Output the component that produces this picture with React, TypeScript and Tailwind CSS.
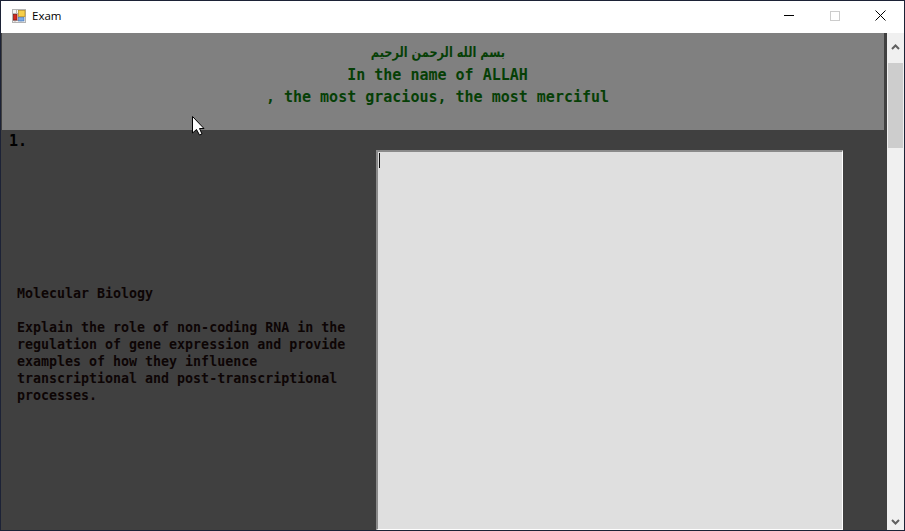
export default function App() {
  const mono = { fontFamily: '"DejaVu Sans Mono", monospace' };
  return (
    <div className="w-[905px] h-[531px] overflow-hidden flex flex-col bg-[#1c2236] p-px">
      <div className="h-[32px] shrink-0 bg-white flex items-center relative">
        <svg width="14" height="14" viewBox="0 0 14 14" className="ml-[11px] mt-[-3px]">
          <rect x="0.5" y="0.5" width="13" height="13" fill="#f4f4f4" stroke="#b4b4b4" />
          <path d="M0.5 4.5 H6 M4.5 0.5 V4.5 M0.5 11.5 H6 M3 11.5 V13.5 M9 12.5 V13.5" stroke="#b4b4b4" fill="none" />
          <rect x="6.5" y="1.5" width="6.5" height="6" fill="#f7cf4a" stroke="#b8912a" strokeWidth="0.8" />
          <rect x="1.5" y="5.5" width="3.5" height="5.5" fill="#d4281e" stroke="#8a1a14" strokeWidth="0.8" />
          <rect x="6.5" y="8.5" width="5.5" height="3.5" fill="#7aaae8" stroke="#3f70b0" strokeWidth="0.6" />
        </svg>
        <span className="ml-[6px] text-[11.5px] text-black mt-[-2px]" style={{ fontFamily: '"Open Sans", sans-serif' }}>Exam</span>
        <div className="ml-auto flex items-center mt-[-3px]">
          <div className="w-[10px] h-px bg-black mr-[36px]" />
          <div className="w-[10px] h-[10px] border border-[#cccccc] mr-[35px]" />
          <svg width="11" height="11" viewBox="0 0 11 11" className="mr-[18px]">
            <path d="M0.5 0.5 L10.5 10.5 M10.5 0.5 L0.5 10.5" stroke="#000" strokeWidth="1" />
          </svg>
        </div>
      </div>
      <div className="flex-1 min-h-0 flex">
        <div className="flex-1 min-w-0 bg-[#404040] pl-px pr-[3px] flex flex-col relative">
          <div className="h-[97px] shrink-0 bg-[#808080] flex flex-col items-center text-[#063f06] font-bold text-[15px] pt-[9px] pr-[11px] leading-[21.5px]" style={mono}>
            <div dir="rtl" className="text-[14px] h-[23px] scale-x-[0.81]" style={{ fontFamily: '"DejaVu Sans", sans-serif' }}>بسم الله الرحمن الرحيم</div>
            <div>In the name of ALLAH</div>
            <div>, the most gracious, the most merciful</div>
          </div>
          <div className="text-[15px] font-bold text-black leading-[20px] ml-[7px] mt-px h-[19px]" style={mono}>1.</div>
          <div className="flex flex-1 min-h-0">
            <div className="w-[374px] shrink-0 pl-[15px] pt-[135px] text-[13.3px] font-bold leading-[17px] text-[#0d0505]" style={mono}>
              <p>Molecular Biology</p>
              <p className="mt-[17px] w-[340px]">Explain the role of non-coding RNA in the regulation of gene expression and provide examples of how they influence transcriptional and post-transcriptional processes.</p>
            </div>
            <div className="w-[467px] h-[380px] shrink-0 bg-[#dfdfdf] border-t-2 border-l-2 border-[#8a8a8a] border-r border-r-white border-b border-b-white pl-px pt-px">
              <div className="w-px h-[15px] bg-[#111111]" />
            </div>
          </div>
          <svg width="14" height="21" viewBox="0 0 14 21" className="absolute left-[191px] top-[83px]">
            <path d="M0.5 0.5 L0.5 17 L4.5 13.5 L7.5 19 L10 18 L7.5 12.5 L12 12.5 Z" fill="#fff" stroke="#000" strokeWidth="1" />
          </svg>
        </div>
        <div className="w-[17px] shrink-0 bg-[#f0f0f0] flex flex-col items-center">
          <div className="h-[30px] w-full shrink-0 flex items-center justify-center pb-[2px]">
            <svg width="9" height="6" viewBox="0 0 9 6"><path d="M1 5 L4.5 1.5 L8 5" fill="none" stroke="#606060" strokeWidth="2" /></svg>
          </div>
          <div className="h-[85px] w-[15px] shrink-0 bg-[#cdcdcd]" />
          <div className="flex-1" />
          <div className="h-[16px] w-full shrink-0 flex items-center justify-center">
            <svg width="9" height="6" viewBox="0 0 9 6"><path d="M1 1 L4.5 4.5 L8 1" fill="none" stroke="#606060" strokeWidth="2" /></svg>
          </div>
        </div>
      </div>
    </div>
  );
}
